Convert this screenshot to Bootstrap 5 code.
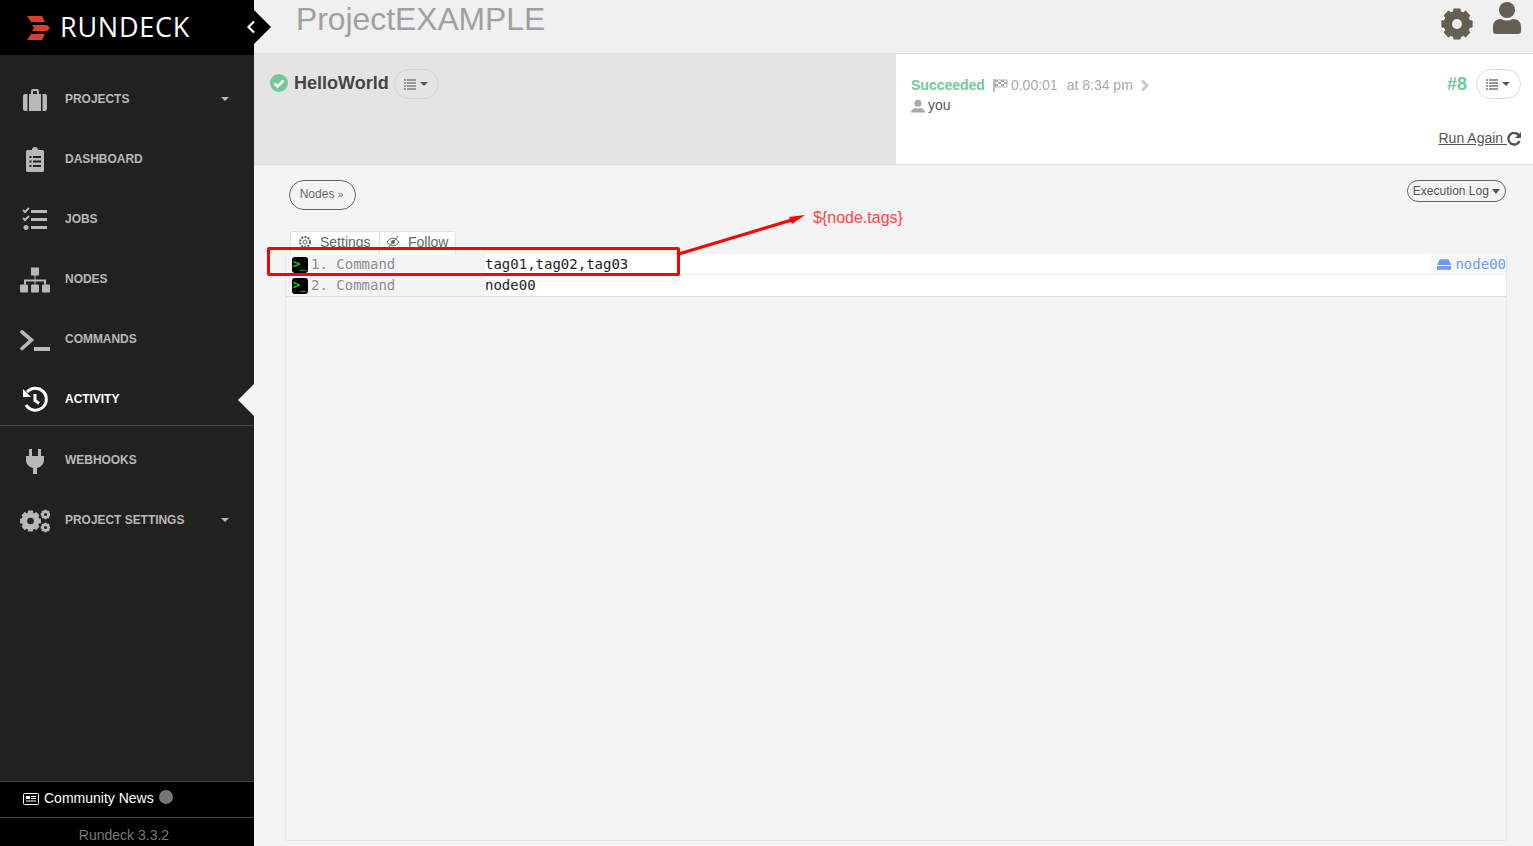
<!DOCTYPE html>
<html lang="en"><head><meta charset="utf-8"><title>Rundeck</title>
<link rel="stylesheet" href="https://cdn.jsdelivr.net/npm/bootstrap@5.3.0/dist/css/bootstrap.min.css">
<style>
html,body{height:100%;overflow:hidden}
body{font-family:"Liberation Sans",Arial,sans-serif;background:#f4f4f4;color:#555}
.rd-shell{height:846px;width:1533px;position:relative}
.rd-side{width:254px;background:#212120;flex:none;position:relative}
.rd-brand{height:55px;background:#000;color:#fff;padding-left:27px;position:relative}
.rd-word{font-family:"Open Sans",sans-serif;font-size:27px;letter-spacing:.75px;margin:0 0 2px 10px;line-height:51px;font-weight:400}
.rd-toggle{position:absolute;left:254px;top:10px;width:17px;height:34px;background:#000;clip-path:polygon(0 0,100% 50%,0 100%);z-index:3}
.rd-chev{position:absolute;left:246px;top:20px;z-index:4}
.rd-navlist{padding-top:14px}
.rd-item{height:60px;color:#b8b8b8;font-size:12px;letter-spacing:-.04px;font-weight:700;padding-left:20px;position:relative}
.rd-item.rd-on{color:#fff;height:56px;padding-top:3px}
.rd-item.rd-hook{height:64px;padding-top:3px}
.rd-ico{width:30px;height:30px;margin-right:15px;flex:none}
.rd-caret{position:absolute;left:221px;top:28px;border:4px solid transparent;border-top-color:#b8b8b8;border-bottom:0}
.rd-notch{position:absolute;right:0;top:15px;width:16px;height:32px;background:#f4f4f4;clip-path:polygon(100% 0,0 50%,100% 100%)}
.rd-rule{border-top:1px solid #444}
.rd-news{height:36px;background:#000;border-top:1px solid #444;color:#fff;font-size:14px;padding-left:23px;padding-bottom:2px}
.rd-dot{width:14px;height:14px;border-radius:50%;background:#777;margin:-4px 0 0 5px}
.rd-ver{height:29px;background:#000;border-top:1px solid #444;color:#777;font-size:14px;text-align:center;padding-right:6px;line-height:35px}
.rd-top{height:54px;background:#f0f0f0;border-bottom:1px solid #ddd;padding:0 12px 0 42px;overflow:hidden}
.rd-proj{font-size:31.8px;color:#a0a0a0;line-height:38px}
.rd-head{height:111px;border-bottom:1px solid #ddd}
.rd-hl{width:642px;background:#e4e4e4;padding:15px 0 0 16px}
.rd-hr{background:#fff;padding:15px 12px 0 15px;position:relative}
.rd-job{font-size:18px;font-weight:700;color:#444;margin:1px 5px 0 6px}
.rd-pill{width:45px;height:30px;border:1px solid #d8d5ce;border-radius:15px;background:transparent;padding:0}
.rd-ok{color:#74c69b;font-weight:700;font-size:14px}
.rd-mut{color:#a9a9a9;font-size:14px}
.rd-num{color:#74c69b;font-size:18px;font-weight:700;margin-right:9px}
.rd-again{font-size:14px;color:#555;position:absolute;right:12px;top:74px}
.rd-body{padding:15px 26px 5px 31px;position:relative}
.rd-btn{border:1px solid #666;border-radius:15px;background:transparent;color:#666;font-size:12px;padding:0}
.rd-btn.rd-n{width:67px;height:30px;margin-left:4px;padding:0 2px 2px 0}
.rd-btn.rd-x{width:99px;height:22px;color:#555;margin-right:1px}
.rd-tabs{width:166px;height:23px;margin:21px 0 0 5px;border:1px solid #e2e2e2;border-bottom:0;border-radius:3px 3px 0 0;background:#fff;font-size:14px;color:#666;overflow:hidden}
.rd-tab{height:22px;padding-left:7px;white-space:nowrap}
.rd-tab+.rd-tab{border-left:1px solid #ddd}
.rd-log{height:587px;border-left:1px solid #eaeaea;border-right:1px solid #eaeaea;border-bottom:1px solid #e2e2e2;font-family:"DejaVu Sans Mono","Liberation Mono",monospace;font-size:14px;line-height:21px}
.rd-row{height:21px;position:relative;white-space:pre;border-bottom:1px dotted #e8e8e8}
.rd-row.rd-b{border-bottom:1px solid #ddd;height:22px}
.rd-term{width:16px;height:16px;border-radius:3px;background:#000;color:#0f0;font-size:12px;line-height:15px;margin:3px 3px 0 6px;padding-left:1px;flex:none;letter-spacing:-.8px}
.rd-step{width:174px;color:#8b8f94;background:#f4f4f4;flex:none;font-size:14px}
.rd-val{background:#fff;color:#222;flex:1}
.rd-node{color:#6f9cf0;background:#f7f7f7;padding-left:6px;flex:none;width:75px}
.rd-mark{position:absolute;left:267px;top:247px;width:413px;height:29px;border:3px solid #f00;border-radius:2px;z-index:5}
.rd-arrow{position:absolute;left:675px;top:210px;z-index:5}
.rd-anno{position:absolute;left:813px;top:206px;color:#f44;font-size:16px;z-index:5}
</style></head>
<body>
<svg width="0" height="0" class="position-absolute"><defs>
 <g id="rdcog"><circle r="7" fill="none" stroke="currentColor" stroke-width="6.400"/>
  <g fill="currentColor"><rect x="-2.900" y="-12" width="5.800" height="5" rx=".8"/><rect x="-2.900" y="-12" width="5.800" height="5" rx=".8" transform="rotate(45)"/><rect x="-2.900" y="-12" width="5.800" height="5" rx=".8" transform="rotate(90)"/><rect x="-2.900" y="-12" width="5.800" height="5" rx=".8" transform="rotate(135)"/><rect x="-2.900" y="-12" width="5.800" height="5" rx=".8" transform="rotate(180)"/><rect x="-2.900" y="-12" width="5.800" height="5" rx=".8" transform="rotate(225)"/><rect x="-2.900" y="-12" width="5.800" height="5" rx=".8" transform="rotate(270)"/><rect x="-2.900" y="-12" width="5.800" height="5" rx=".8" transform="rotate(315)"/></g></g>
</defs></svg>
<div class="rd-shell d-flex">
 <aside class="rd-side d-flex flex-column">
  <div class="rd-brand d-flex align-items-center">
   <svg width="23" height="24" viewBox="0 0 23 24"><path fill="#d9402a" d="M0 0h15l3 6H4zM5 9h15l3 3-3 3H5l2-3zM4 18h14l-3 6H0z"/></svg>
   <span class="rd-word">RUNDECK</span>
  </div>
  <div class="rd-toggle"></div>
  <svg class="rd-chev" width="10" height="14" viewBox="0 0 10 14"><path d="M8 1.500 2.500 7 8 12.500" fill="none" stroke="#fff" stroke-width="2.200"/></svg>
  <nav class="rd-navlist flex-grow-1">
   <div class="rd-item d-flex align-items-center"><svg class="rd-ico" viewBox="0 0 30 30" fill="#b8b8b8"><path d="M5 10h2.500v17H5a2 2 0 0 1-2-2V12a2 2 0 0 1 2-2zM22.500 10H25a2 2 0 0 1 2 2v13a2 2 0 0 1-2 2h-2.500zM9 10h2V7a2 2 0 0 1 2-2h4a2 2 0 0 1 2 2v3h2v17H9zM13 7v3h4V7z" fill-rule="evenodd"/></svg>PROJECTS<span class="rd-caret"></span></div>
   <div class="rd-item d-flex align-items-center"><svg class="rd-ico" viewBox="0 0 30 30" fill="#b8b8b8"><path fill-rule="evenodd" d="M7.500 6H12a3 3 0 0 1 6 0h4.500A1.500 1.500 0 0 1 24 7.500v19a1.500 1.500 0 0 1-1.500 1.500h-15A1.500 1.500 0 0 1 6 26.500v-19A1.500 1.500 0 0 1 7.500 6zM9.500 12v2h2v-2zM13 12v2h8v-2zM9.500 16.500v2h2v-2zM13 16.500v2h8v-2zM9.500 21v2h2v-2zM13 21v2h8v-2z"/></svg>DASHBOARD</div>
   <div class="rd-item d-flex align-items-center"><svg class="rd-ico" viewBox="0 0 30 30" fill="#b8b8b8"><path d="M11 6h16v3H11zM11 14h16v3H11zM11 22h16v3H11z"/><circle cx="6" cy="23.500" r="2.500"/><path d="M3 6l2 2 4-4M3 14l2 2 4-4" fill="none" stroke="#b8b8b8" stroke-width="2"/></svg>JOBS</div>
   <div class="rd-item d-flex align-items-center"><svg class="rd-ico" viewBox="0 0 30 30" fill="#b8b8b8"><g transform="translate(0 2.500)"><path d="M11 1h8v8h-3.500v4H26v5h-2v-3H15.500v3h-1v-3H6v3H4v-5h10.500V9H11z"/><rect y="18" width="8" height="8" rx="1"/><rect x="11" y="18" width="8" height="8" rx="1"/><rect x="22" y="18" width="8" height="8" rx="1"/></g></svg>NODES</div>
   <div class="rd-item d-flex align-items-center"><svg class="rd-ico" viewBox="0 0 30 30"><path d="M2 8 11.500 16 2 24.500" fill="none" stroke="#b8b8b8" stroke-width="3.600" stroke-linecap="round"/><path fill="#b8b8b8" d="M14 23h16v4H14z"/></svg>COMMANDS</div>
   <div class="rd-item rd-on d-flex align-items-center"><svg class="rd-ico" viewBox="0 0 30 30"><path d="M7 8a11 11 0 1 1-1 13" fill="none" stroke="#fff" stroke-width="3"/><path fill="#fff" d="M3 5v8h8z"/><path d="M15 10v6.500l4 3" fill="none" stroke="#fff" stroke-width="3"/></svg>ACTIVITY<span class="rd-notch"></span></div>
   <div class="rd-rule"></div>
   <div class="rd-item rd-hook d-flex align-items-center"><svg class="rd-ico" viewBox="0 0 30 30" fill="#b8b8b8"><g transform="translate(0 1)"><path d="M9 3h3v7H9zM18 3h3v7h-3zM6 10h18v4a8 8 0 0 1-7 8v6h-4v-6a8 8 0 0 1-7-8z"/></g></svg>WEBHOOKS</div>
   <div class="rd-item d-flex align-items-center"><svg class="rd-ico" viewBox="0 0 30 30" style="color:#b8b8b8"><use href="#rdcog" transform="translate(10.500 16) scale(.87)"/><use href="#rdcog" transform="translate(25.500 9.500) scale(.4)"/><use href="#rdcog" transform="translate(25.500 22.500) scale(.4)"/></svg>PROJECT SETTINGS<span class="rd-caret"></span></div>
  </nav>
  <div class="rd-news d-flex align-items-center"><svg width="16" height="12" viewBox="0 0 16 12" style="margin-right:5px"><rect x=".5" y=".5" width="15" height="11" rx="1" fill="none" stroke="#fff"/><path fill="#fff" d="M3 3h4v3H3zM8 3h5v1H8zM8 5h5v1H8zM3 7.500h10v1H3z"/></svg>Community News<span class="rd-dot"></span></div>
  <div class="rd-ver">Rundeck 3.3.2</div>
 </aside>
 <main class="flex-grow-1 d-flex flex-column" style="min-width:0">
  <div class="rd-top d-flex justify-content-between">
   <div class="rd-proj">ProjectEXAMPLE</div>
   <div class="d-flex" style="gap:20px">
    <svg width="32" height="32" viewBox="0 0 32 32" style="margin-top:8px;color:#655e54"><use href="#rdcog" transform="translate(16 16) scale(1.300)"/></svg>
    <svg width="28" height="32" viewBox="0 0 28 32" style="margin-top:2px" fill="#655e54"><circle cx="14" cy="8" r="8"/><path d="M8 17c4 2 8 2 12 0 5 0 8 3 8 7.500V29a3 3 0 0 1-3 3H3a3 3 0 0 1-3-3v-4.500C0 20 3 17 8 17z"/></svg>
   </div>
  </div>
  <div class="rd-head d-flex">
   <div class="rd-hl d-flex align-items-start">
    <svg width="18" height="18" viewBox="0 0 18 18" style="margin-top:5px"><circle cx="9" cy="9" r="9" fill="#74c69b"/><path d="M4.500 9.500 7.500 12.500 13.500 6.500" fill="none" stroke="#fff" stroke-width="2.500"/></svg>
    <span class="rd-job">HelloWorld</span>
    <button class="rd-pill"><svg width="25" height="11" viewBox="0 0 25 11" fill="#999"><path d="M0 0h2v2H0zM3 0h9v2H3zM0 3h2v2H0zM3 3h9v2H3zM0 6h2v2H0zM3 6h9v2H3zM0 9h2v2H0zM3 9h9v2H3z"/><path d="M16 3h8l-4 4z" fill="#555"/></svg></button>
   </div>
   <div class="rd-hr flex-grow-1 d-flex justify-content-between">
    <div>
     <div class="d-flex align-items-center" style="height:32px"><span class="rd-ok me-2">Succeeded</span>
      <svg width="15" height="14" viewBox="0 0 15 14"><path d="M1 1v13" stroke="#aaa" stroke-width="1.500"/><path d="M2 2h12v7H2z" fill="none" stroke="#aaa"/><path d="M2 2h3v2H2zM8 2h3v2H8zM5 4h3v2H5zM11 4h3v2h-3zM2 6h3v2H2zM8 6h3v2H8z" fill="#aaa"/></svg>
      <span class="rd-mut" style="margin-left:3px">0.00:01</span><span class="rd-mut" style="margin-left:9px">at 8:34 pm</span>
      <svg width="10" height="13" viewBox="0 0 10 13" style="margin-left:7px"><path d="M2 1.500l5 5-5 5" fill="none" stroke="#ccc" stroke-width="3"/></svg></div>
     <div class="d-flex align-items-center" style="font-size:14px;color:#555;height:9px"><svg width="14" height="14" viewBox="0 0 15 14" fill="#aaa" style="margin-right:3px"><circle cx="7.500" cy="4" r="3.800"/><path d="M0 14c0-3 3-4 5-5 1.500 1 3.500 1 5 0 2 1 5 2 5 5z"/></svg>you</div>
    </div>
    <div class="d-flex align-items-start"><span class="rd-num mt-1" style="line-height:22px">#8</span>
     <button class="rd-pill" style="border-color:#ddd"><svg width="25" height="11" viewBox="0 0 25 11" fill="#999"><path d="M0 0h2v2H0zM3 0h9v2H3zM0 3h2v2H0zM3 3h9v2H3zM0 6h2v2H0zM3 6h9v2H3zM0 9h2v2H0zM3 9h9v2H3z"/><path d="M16 3h8l-4 4z" fill="#555"/></svg></button></div>
    <div class="rd-again d-flex align-items-center"><span class="text-decoration-underline">Run Again&nbsp;</span><svg width="14" height="14" viewBox="0 0 14 14"><path d="M12 3.500A5.800 5.800 0 1 0 12.500 9" fill="none" stroke="#555" stroke-width="2.400"/><path fill="#555" d="M14 0v6H8z"/></svg></div>
   </div>
  </div>
  <div class="rd-body flex-grow-1">
   <div class="d-flex justify-content-between align-items-start"><button class="rd-btn rd-n">Nodes <small style="font-size:10px">»</small></button>
    <button class="rd-btn rd-x">Execution Log <svg width="8" height="5" viewBox="0 0 8 5"><path d="M0 0h8L4 5z" fill="#555"/></svg></button></div>
   <div class="rd-tabs d-flex">
    <div class="rd-tab" style="width:88px"><svg width="14" height="14" viewBox="0 0 14 14" style="margin-right:8px;vertical-align:-2px"><circle cx="7" cy="7" r="2" fill="none" stroke="#666"/><circle cx="7" cy="7" r="5" fill="none" stroke="#666" stroke-width="2" stroke-dasharray="2 1.200"/></svg>Settings</div>
    <div class="rd-tab" style="padding-left:6px"><svg width="14" height="14" viewBox="0 0 14 14" style="margin-right:8px;vertical-align:-2px"><path d="M1 7c3-5 9-5 12 0-3 5-9 5-12 0z" fill="none" stroke="#666"/><circle cx="7" cy="7" r="2" fill="#666"/><path d="M2 13 12 1" stroke="#666"/></svg>Follow</div>
   </div>
   <div class="rd-log">
    <div class="rd-row d-flex"><span class="rd-term">&gt;_</span><span class="rd-step">1. Command</span><span class="rd-val">tag01,tag02,tag03</span><span class="rd-node d-flex align-items-center"><svg width="15" height="11" viewBox="0 0 15 11" style="margin-right:4px"><path fill="#6f9cf0" d="M3 0h9l3 6H0zM0 7h15v4H0z"/></svg>node00</span></div>
    <div class="rd-row rd-b d-flex"><span class="rd-term">&gt;_</span><span class="rd-step">2. Command</span><span class="rd-val">node00</span></div>
   </div>
  </div>
 </main>
 <div class="rd-mark"></div>
 <svg class="rd-arrow" width="135" height="50" viewBox="0 0 135 50"><path d="M2 44.500 120 9" stroke="#f00" stroke-width="3"/><path fill="#f00" d="M130 5 114 7 117 14z"/></svg>
 <div class="rd-anno">${node.tags}</div>
</div>
</body></html>
